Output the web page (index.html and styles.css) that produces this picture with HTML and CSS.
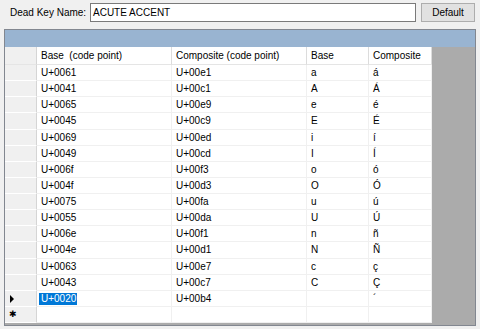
FILE: index.html
```html
<!DOCTYPE html>
<html>
<head>
<meta charset="utf-8">
<link rel="stylesheet" href="styles.css">
</head>
<body>
<div class="top">
  <label class="lbl">Dead Key Name:</label>
  <div class="textbox">ACUTE ACCENT</div>
  <div class="btn">Default</div>
</div>
<div class="grid">
  <div class="caption"></div>
  <div class="area">
    <div class="table">
      <div class="c corner"></div><div class="c hd pre">Base  (code point)</div><div class="c hd">Composite (code point)</div><div class="c hd">Base</div><div class="c hd">Composite</div>
      <div class="c rh"></div><div class="c">U+0061</div><div class="c">U+00e1</div><div class="c">a</div><div class="c">á</div>
      <div class="c rh"></div><div class="c">U+0041</div><div class="c">U+00c1</div><div class="c">A</div><div class="c">Á</div>
      <div class="c rh"></div><div class="c">U+0065</div><div class="c">U+00e9</div><div class="c">e</div><div class="c">é</div>
      <div class="c rh"></div><div class="c">U+0045</div><div class="c">U+00c9</div><div class="c">E</div><div class="c">É</div>
      <div class="c rh"></div><div class="c">U+0069</div><div class="c">U+00ed</div><div class="c">i</div><div class="c">í</div>
      <div class="c rh"></div><div class="c">U+0049</div><div class="c">U+00cd</div><div class="c">I</div><div class="c">Í</div>
      <div class="c rh"></div><div class="c">U+006f</div><div class="c">U+00f3</div><div class="c">o</div><div class="c">ó</div>
      <div class="c rh"></div><div class="c">U+004f</div><div class="c">U+00d3</div><div class="c">O</div><div class="c">Ó</div>
      <div class="c rh"></div><div class="c">U+0075</div><div class="c">U+00fa</div><div class="c">u</div><div class="c">ú</div>
      <div class="c rh"></div><div class="c">U+0055</div><div class="c">U+00da</div><div class="c">U</div><div class="c">Ú</div>
      <div class="c rh"></div><div class="c">U+006e</div><div class="c">U+00f1</div><div class="c">n</div><div class="c">ñ</div>
      <div class="c rh"></div><div class="c">U+004e</div><div class="c">U+00d1</div><div class="c">N</div><div class="c">Ñ</div>
      <div class="c rh"></div><div class="c">U+0063</div><div class="c">U+00e7</div><div class="c">c</div><div class="c">ç</div>
      <div class="c rh"></div><div class="c">U+0043</div><div class="c">U+00c7</div><div class="c">C</div><div class="c">Ç</div>
      <div class="c rh"><span class="tri"></span></div><div class="c edit"><span class="sel">U+0020</span></div><div class="c">U+00b4</div><div class="c"></div><div class="c">´</div>
      <div class="c rh"><span class="star">✱</span></div><div class="c"></div><div class="c"></div><div class="c"></div><div class="c"></div>
    </div>
  </div>
</div>
</body>
</html>
```
FILE: styles.css
```css
html, body {
  margin: 0;
  padding: 0;
}
body {
  width: 480px;
  height: 329px;
  background: #f0f0f0;
  font-family: "Liberation Sans", Arial, sans-serif;
  font-size: 10px;
  color: #000;
  overflow: hidden;
}
.top {
  display: flex;
  align-items: center;
  height: 19px;
  padding: 3px 0 0 10px;
}
.lbl {
  width: 80px;
}
.textbox {
  box-sizing: border-box;
  width: 326px;
  height: 19px;
  border: 1px solid #7a7a7a;
  background: #fff;
  padding: 0 2px;
  line-height: 17px;
}
.btn {
  box-sizing: border-box;
  margin-left: 5px;
  width: 54px;
  height: 19px;
  border: 1px solid #adadad;
  background: #e1e1e1;
  text-align: center;
  line-height: 17px;
}
.grid {
  box-sizing: border-box;
  margin: 7px 0 0 4px;
  width: 472px;
  height: 297px;
  border: 1px solid #828790;
  background: #ababab;
  display: flex;
  flex-direction: column;
}
.caption {
  height: 17px;
  background: #99b4d1;
  flex: none;
}
.area {
  flex: 1;
  background: #ababab;
}
.table {
  display: grid;
  grid-template-columns: 32px 135px 135px 62px 63px;
  grid-template-rows: 18px repeat(16, 16.125px);
  width: 427px;
}
.c {
  box-sizing: border-box;
  background: #fff;
  border-right: 1px solid #f0f0f0;
  border-bottom: 1px solid #f0f0f0;
  padding-left: 4px;
  line-height: 16px;
  white-space: nowrap;
  overflow: hidden;
  position: relative;
}
.hd {
  background: #fff;
  border-right: 1px solid #dcdcdc;
  border-bottom: 1px solid #e5e5e5;
  line-height: 17px;
}
.pre {
  white-space: pre;
}
.corner {
  background: #f0f0f0;
  border-right: 1px solid #d5d5d5;
  border-bottom: 1px solid #e5e5e5;
}
.rh {
  background: #f0f0f0;
  border-right: 1px solid #d5d5d5;
  border-bottom: 1px solid #fff;
}
.edit {
  padding-left: 2px;
}
.sel {
  background: #0078d7;
  color: #fff;
  padding: 0 1px 0 2px;
  display: inline-block;
  line-height: 12px;
  margin-top: 2px;
}
.tri {
  position: absolute;
  left: 5px;
  top: 4px;
  width: 0;
  height: 0;
  border-top: 4px solid transparent;
  border-bottom: 4px solid transparent;
  border-left: 4px solid #000;
}
.star {
  position: absolute;
  left: 4px;
  top: 0;
  font-family: "DejaVu Sans", sans-serif;
  font-size: 9px;
  line-height: 15px;
}
```
